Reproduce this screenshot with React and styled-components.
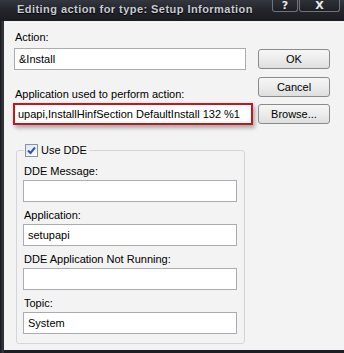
import React from 'react'
import styled, { createGlobalStyle } from 'styled-components'

const GlobalStyle = createGlobalStyle`
    html, body {
        margin: 0;
        padding: 0;
        width: 344px;
        height: 353px;
        overflow: hidden;
        background: #1c1e24;
    }
    * {
        box-sizing: border-box;
    }
`;

const Window = styled.div`
    width: 344px;
    height: 353px;
    display: flex;
    flex-direction: column;
    background: #1c1e24;
    font-family: "Liberation Sans", Arial, sans-serif;
    font-size: 11px;
    color: #000;
`;

const TitleBar = styled.div`
    height: 21px;
    flex: none;
    display: flex;
    align-items: flex-start;
    justify-content: space-between;
    padding-left: 17px;
    padding-right: 4px;
    background: linear-gradient(#34373e 0%, #24262c 45%, #1a1c21 100%);
`;

const Title = styled.span`
    margin-top: 3px;
    font-weight: bold;
    font-size: 11px;
    color: #c9ccd2;
    letter-spacing: 0.45px;
    text-shadow: 0 1px 1px #000;
`;

const CaptionButtons = styled.div`
    display: flex;
    gap: 1px;
`;

const CaptionButton = styled.div`
    width: ${ p => p.wide ? 41 : 26 }px;
    height: 12px;
    display: flex;
    align-items: center;
    justify-content: center;
    border: 1px solid #6f737b;
    border-top: none;
    border-radius: 0 0 3px 3px;
    background: linear-gradient(#2e3137, #1d1f24);
    color: #e8e9ec;
    font-weight: bold;
    font-size: 11px;
    line-height: 1;
    font-family: "DejaVu Sans", sans-serif;
`;

const Frame = styled.div`
    flex: 1;
    display: flex;
    padding: 0 0 3px 4px;
    background: linear-gradient(90deg, #15171b 0, #3a3d44 3px, #1c1e24 4px);
`;

const Body = styled.div`
    flex: 1;
    background: #f3f3f3;
    padding: 10px 0 0 10px;
    display: flex;
    flex-direction: column;
`;

const TopSection = styled.div`
    display: flex;
`;

const LeftColumn = styled.div`
    width: 244px;
    display: flex;
    flex-direction: column;
`;

const RightColumn = styled.div`
    display: flex;
    flex-direction: column;
    padding-top: 18px;
    gap: 7px;
`;

const Label = styled.div`
    height: 13px;
    line-height: 13px;
    margin-top: ${ p => p.top || 0 }px;
    padding-left: 1px;
    white-space: nowrap;
`;

const Input = styled.div`
    width: ${ p => p.width }px;
    height: 22px;
    margin-top: ${ p => p.top || 2 }px;
    border: 1px solid #a9adb3;
    background: #fff;
    padding: 0 4px;
    display: flex;
    align-items: center;
    white-space: nowrap;
    overflow: hidden;
`;

const HighlightInput = styled(Input)`
    margin-left: -1px;
    border: 2px solid #c8141c;
    padding: 0 3px;
    box-shadow: 2px 3px 4px rgba(0, 0, 0, 0.3);
`;

const Button = styled.div`
    width: 72px;
    height: 20px;
    display: flex;
    align-items: center;
    justify-content: center;
    border: 1px solid #8a8a8a;
    border-radius: 3px;
    background: linear-gradient(#f6f6f6 0%, #ececec 50%, #dedede 100%);
    margin-top: ${ p => p.top || 0 }px;
`;

const GroupBox = styled.fieldset`
    width: 229px;
    margin: 18px 0 0 2px;
    padding: 0 0 9px 6px;
    border: 1px solid #d3d6d9;
    border-radius: 3px;
    display: flex;
    flex-direction: column;
`;

const Legend = styled.legend`
    padding: 0 2px 0 1px;
    margin-left: 1px;
    display: flex;
    align-items: center;
    gap: 3px;
    height: 14px;
`;

const CheckBox = styled.span`
    width: 13px;
    height: 13px;
    border: 1px solid #7f95ad;
    background: linear-gradient(135deg, #dfe3ea, #fff);
    display: flex;
    align-items: center;
    justify-content: center;
`;

const Field = styled.div`
    display: flex;
    flex-direction: column;
    margin-top: ${ p => p.top }px;
`;

const App = () => (
    <Window>
        <GlobalStyle/>
        <TitleBar>
            <Title>Editing action for type: Setup Information</Title>
            <CaptionButtons>
                <CaptionButton>?</CaptionButton>
                <CaptionButton wide>X</CaptionButton>
            </CaptionButtons>
        </TitleBar>
        <Frame>
            <Body>
                <TopSection>
                    <LeftColumn>
                        <Label>Action:</Label>
                        <Input width={ 232 } top={ 4 }>&amp;Install</Input>
                        <Label top={ 18 }>Application used to perform action:</Label>
                        <HighlightInput width={ 240 }>
                            upapi,InstallHinfSection DefaultInstall 132 %1
                        </HighlightInput>
                    </LeftColumn>
                    <RightColumn>
                        <Button>OK</Button>
                        <Button top={ 1 }>Cancel</Button>
                        <Button>Browse...</Button>
                    </RightColumn>
                </TopSection>

                <GroupBox>
                    <Legend>
                        <CheckBox>
                            <svg width="9" height="9" viewBox="0 0 9 9">
                                <path d="M1 4.5 L3.5 7 L8 1.5" fill="none" stroke="#2a56b8" strokeWidth="2"/>
                            </svg>
                        </CheckBox>
                        Use DDE
                    </Legend>
                    <Field top={ 8 }>
                        <Label>DDE Message:</Label>
                        <Input width={ 214 }/>
                    </Field>
                    <Field top={ 7 }>
                        <Label>Application:</Label>
                        <Input width={ 214 }>setupapi</Input>
                    </Field>
                    <Field top={ 7 }>
                        <Label>DDE Application Not Running:</Label>
                        <Input width={ 214 }/>
                    </Field>
                    <Field top={ 7 }>
                        <Label>Topic:</Label>
                        <Input width={ 214 }>System</Input>
                    </Field>
                </GroupBox>
            </Body>
        </Frame>
    </Window>
)

export default App;
